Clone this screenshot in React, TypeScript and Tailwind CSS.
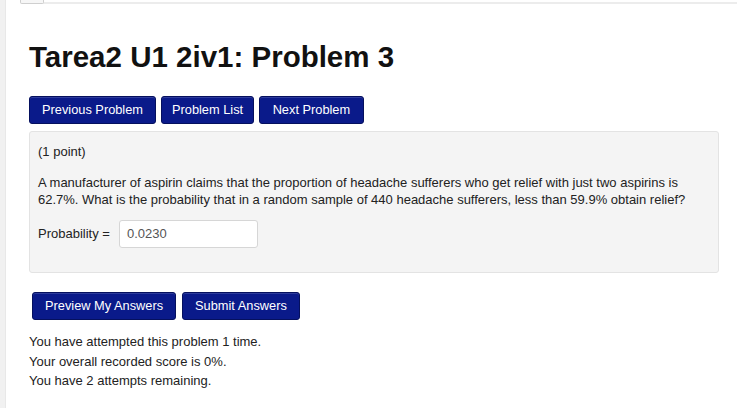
import React from "react";

const btn =
  "h-[28px] rounded-[3px] bg-[#0a1a8a] border border-[#05105e] text-white text-[12.8px] leading-none flex items-center shadow-[inset_0_1px_0_rgba(255,255,255,0.15)]";

export default function App() {
  return (
    <div
      className="w-[737px] h-[408px] bg-white flex overflow-hidden text-[#333]"
      style={{ fontFamily: '"Liberation Sans", Arial, sans-serif' }}
    >
      <div className="w-[6px] h-full bg-[#f1f1f1] border-r border-[#e8e8e8] shrink-0" />
      <div className="flex-1 flex flex-col">
        <div className="flex items-start h-[6px]">
          <div className="ml-[14px] w-[24px] h-[4px] border border-t-0 border-[#cfcfcf] rounded-b-[2px] bg-[#f6f6f6]" />
          <div className="flex-1 mt-[2px] h-[2px] bg-[#ececec]" />
        </div>
        <div className="pl-[23px] pr-[18px]">
          <h1 className="mt-[35px] text-[29.5px] leading-[32px] font-bold text-[#111]">
            Tarea2 U1 2iv1: Problem 3
          </h1>
          <div className="mt-[23px] flex gap-[5px]">
            <button className={`${btn} px-[12px]`}>Previous Problem</button>
            <button className={`${btn} px-[10px]`}>Problem List</button>
            <button className={`${btn} px-[12.5px]`}>Next Problem</button>
          </div>
          <div className="mt-[7px] w-[690px] h-[142px] bg-[#f4f4f4] border border-[#e3e3e3] rounded-[3px] px-[8px] pt-[12px] text-[13px] text-[#222]">
            <div className="leading-[16px]">(1 point)</div>
            <div className="mt-[14px] leading-[17px]">
              A manufacturer of aspirin claims that the proportion of headache sufferers who get relief with just two aspirins is
              <br />
              62.7%. What is the probability that in a random sample of 440 headache sufferers, less than 59.9% obtain relief?
            </div>
            <div className="mt-[12px] flex items-center">
              <span className="w-[81px] shrink-0 whitespace-nowrap">Probability =</span>
              <div className="w-[139px] shrink-0 h-[28px] bg-white border border-[#d6d6d6] rounded-[3px] px-[7px] flex items-center text-[#555] text-[13px]">
                0.0230
              </div>
            </div>
          </div>
          <div className="mt-[19px] ml-[3px] flex gap-[6px]">
            <button className={`${btn} px-[12px]`}>Preview My Answers</button>
            <button className={`${btn} px-[12px]`}>Submit Answers</button>
          </div>
          <div className="mt-[12px] text-[13px] leading-[19.5px] text-[#222]">
            <div>You have attempted this problem 1 time.</div>
            <div>Your overall recorded score is 0%.</div>
            <div>You have 2 attempts remaining.</div>
          </div>
        </div>
      </div>
    </div>
  );
}
